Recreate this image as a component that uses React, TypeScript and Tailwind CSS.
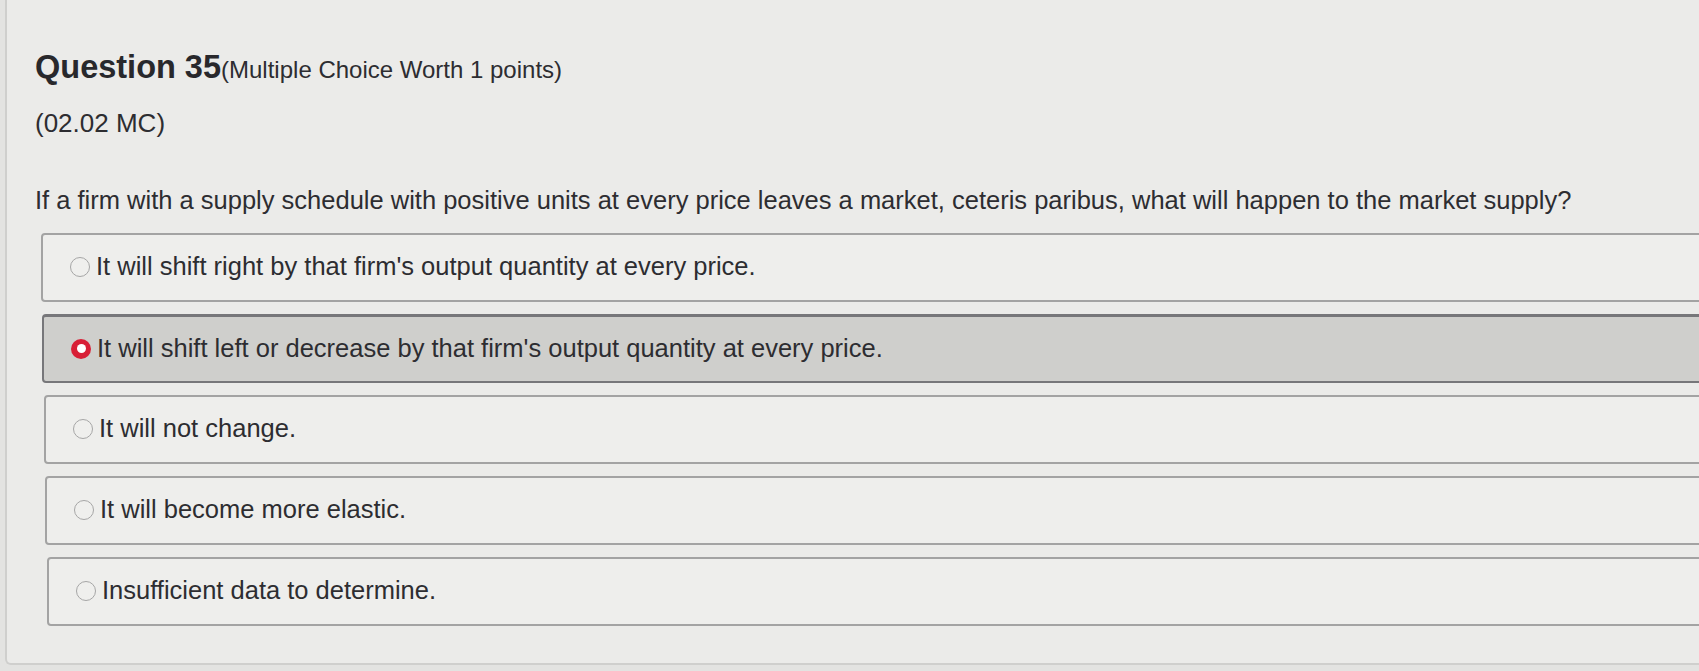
import { type ReactNode } from 'react';

const options: Array<{ id: string; label: string; selected?: boolean; indent: string }> = [
  { id: 'a', label: "It will shift right by that firm's output quantity at every price.", indent: 'ml-[34px]' },
  {
    id: 'b',
    label: "It will shift left or decrease by that firm's output quantity at every price.",
    selected: true,
    indent: 'ml-[35px]'
  },
  { id: 'c', label: 'It will not change.', indent: 'ml-[37px]' },
  { id: 'd', label: 'It will become more elastic.', indent: 'ml-[38px]' },
  { id: 'e', label: 'Insufficient data to determine.', indent: 'ml-[40px]' }
];

const Radio = ({ checked }: { checked?: boolean }) =>
  checked ? (
    <span className="flex h-[20px] w-[20px] shrink-0 items-center justify-center rounded-full bg-[#d81f36]">
      <span className="h-[9px] w-[9px] rounded-full bg-white" />
    </span>
  ) : (
    <span className="h-[20px] w-[20px] shrink-0 rounded-full border-[1.5px] border-[#a6a6a6] bg-[#efefed]" />
  );

const Option = ({ children, selected, indent }: { children: ReactNode; selected?: boolean; indent: string }) => (
  <label
    className={
      selected
        ? `${indent} flex h-[69px] items-center gap-[6px] rounded-[4px] border-[2px] border-t-[3px] border-[#77777a] bg-[#cfcfcc] pl-[27px]`
        : `${indent} flex h-[69px] items-center gap-[6px] rounded-[4px] border-[2px] border-[#a3a3a3] bg-[#eeeeec] pl-[27px]`
    }
  >
    <Radio checked={selected} />
    <span className="text-[25.5px] leading-none text-[#2d2d31]">{children}</span>
  </label>
);

export default function App() {
  return (
    <div
      className="h-[671px] w-[1699px] overflow-hidden bg-[#e3e3e1]"
      style={{ fontFamily: '"Liberation Sans", Arial, sans-serif' }}
    >
      <div className="ml-[5px] h-[665px] rounded-bl-[6px] border-b-[2px] border-l-[2px] border-[#cfcfcd] bg-[#ebebe9]">
        <div className="pl-[28px] pt-[49px]">
          <h1 className="flex items-baseline text-[#28282c]">
            <span className="text-[32.5px] font-bold leading-[1.15]">Question 35</span>
            <span className="text-[24px] text-[#2d2d31]">(Multiple Choice Worth 1 points)</span>
          </h1>
          <p className="mt-[22px] text-[26px] leading-none text-[#2d2d31]">(02.02 MC)</p>
          <p className="mt-[52px] text-[25.5px] leading-none text-[#2d2d31]">
            If a firm with a supply schedule with positive units at every price leaves a market, ceteris paribus, what
            will happen to the market supply?
          </p>
        </div>
        <div className="mr-[-40px] mt-[19px] flex flex-col gap-[12px]">
          {options.map((o) => (
            <Option key={o.id} selected={o.selected} indent={o.indent}>
              {o.label}
            </Option>
          ))}
        </div>
      </div>
    </div>
  );
}
